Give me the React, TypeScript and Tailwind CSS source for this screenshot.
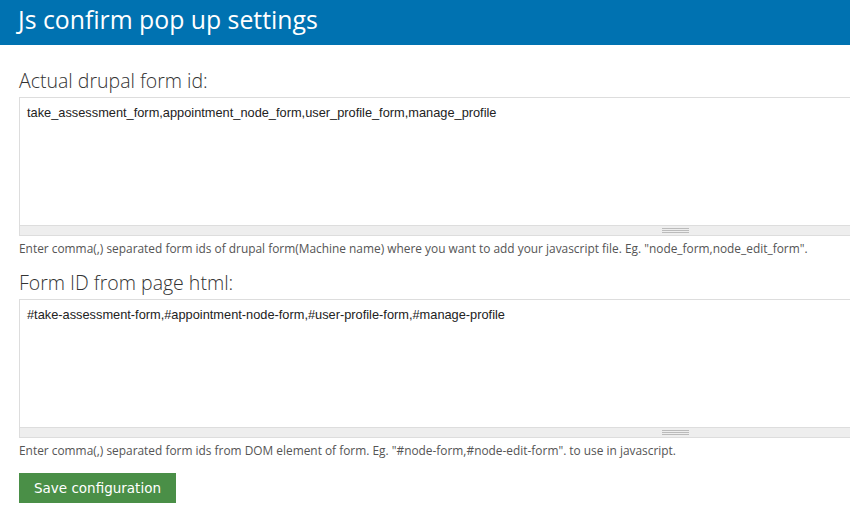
const OPEN = "font-['Open_Sans',sans-serif]";

function Grippie() {
  return (
    <div className="h-[10px] bg-[#eeeeee] border-t border-[#dddddd] flex items-center justify-center">
      <div className="w-[27px] h-[5px] border-y border-[#bbbbbb] flex items-center">
        <div className="w-full h-px bg-[#bbbbbb]" />
      </div>
    </div>
  );
}

function Field({ label, value, help }: { label: string; value: string; help: string }) {
  return (
    <div className="mb-[14px]">
      <div className={`${OPEN} font-light text-[19.5px] leading-[26px] text-[#333333] mb-[3px]`}>{label}</div>
      <div className="w-[1312px] border border-[#dddddd]">
        <div className="h-[127px] px-[7px] pt-[7px] font-['Liberation_Sans',Arial,sans-serif] text-[12.8px] leading-[16px] text-[#222222]">
          {value}
        </div>
        <Grippie />
      </div>
      <div className={`${OPEN} text-[11.9px] leading-[16px] text-[#555555] mt-[4px]`}>{help}</div>
    </div>
  );
}

export default function App() {
  return (
    <div className="w-[850px] h-[531px] overflow-hidden bg-white">
      <div className="h-[45px] bg-[#0072b1] flex items-center px-[18px]">
        <h1 className={`${OPEN} text-white text-[24.8px] leading-none -mt-[6px]`}>Js confirm pop up settings</h1>
      </div>
      <div className="pl-[19px] pt-[23px]">
        <Field
          label="Actual drupal form id:"
          value="take_assessment_form,appointment_node_form,user_profile_form,manage_profile"
          help={'Enter comma(,) separated form ids of drupal form(Machine name) where you want to add your javascript file. Eg. "node_form,node_edit_form".'}
        />
        <Field
          label="Form ID from page html:"
          value="#take-assessment-form,#appointment-node-form,#user-profile-form,#manage-profile"
          help={'Enter comma(,) separated form ids from DOM element of form. Eg. "#node-form,#node-edit-form". to use in javascript.'}
        />
        <button className="mt-px h-[30px] w-[157px] bg-[#4a8f47] text-white font-['DejaVu_Sans',Verdana,sans-serif] text-[13.5px]">
          Save configuration
        </button>
      </div>
    </div>
  );
}
